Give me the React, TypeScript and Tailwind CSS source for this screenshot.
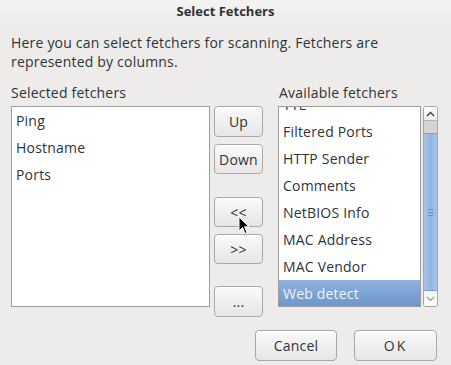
import React from "react";

const font = { fontFamily: '"Open Sans", "DejaVu Sans", sans-serif' };

function Btn({ children, className = "" }: { children: React.ReactNode; className?: string }) {
  return (
    <div
      className={
        "flex items-center justify-center rounded-[4px] border border-[#a9a9a9] bg-gradient-to-b from-[#fafafa] to-[#e6e6e6] text-[14px] text-[#2e3436] shadow-[inset_0_1px_0_#ffffff] " +
        className
      }
    >
      {children}
    </div>
  );
}

export default function App() {
  const left = ["Ping", "Hostname", "Ports"];
  const right = ["TTL", "Filtered Ports", "HTTP Sender", "Comments", "NetBIOS Info", "MAC Address", "MAC Vendor"];
  return (
    <div className="relative w-[451px] h-[365px] overflow-hidden bg-[#edeceb] text-[#2e3436] tracking-[0.2px]" style={font}>
      <div className="h-[23px] flex items-center justify-center text-[13px] font-bold bg-gradient-to-b from-[#f4f3f2] to-[#eeedec] text-[#2e3436] tracking-normal">
        Select Fetchers
      </div>
      <div className="px-[11px] mt-[10px] text-[14px] leading-[19px]">
        Here you can select fetchers for scanning. Fetchers are
        <br />
        represented by columns.
      </div>
      <div className="flex mt-[12px] pl-[11px]">
        <div className="w-[199px] flex flex-col">
          <div className="h-[23px] text-[14px] leading-[19px]">Selected fetchers</div>
          <div className="h-[201px] border border-[#9c9c9c] bg-white flex flex-col">
            {left.map((t) => (
              <div key={t} className="h-[27px] flex items-center pl-[4px] text-[14px]">
                {t}
              </div>
            ))}
          </div>
        </div>
        <div className="ml-[4px] mt-[23px] w-[49px] flex flex-col">
          <Btn className="h-[31px]">Up</Btn>
          <Btn className="h-[30px] mt-[7px]">Down</Btn>
          <Btn className="h-[30px] mt-[23px]">&lt;&lt;</Btn>
          <Btn className="h-[30px] mt-[7px]">&gt;&gt;</Btn>
          <Btn className="h-[31px] mt-[22px] text-[12px]">...</Btn>
        </div>
        <div className="ml-[15px] flex flex-col">
          <div className="h-[23px] text-[14px] leading-[19px] pl-[1px]">Available fetchers</div>
          <div className="flex">
            <div className="w-[143px] h-[201px] border border-[#9c9c9c] bg-white overflow-hidden">
              <div className="mt-[-16px] flex flex-col">
                {right.map((t) => (
                  <div key={t} className="h-[27px] flex items-center pl-[4px] text-[14px]">
                    {t}
                  </div>
                ))}
                <div className="h-[27px] flex items-center pl-[4px] text-[14px] text-[#eef3fa] bg-gradient-to-b from-[#8eb1dd] to-[#6e96cb]">
                  Web detect
                </div>
              </div>
            </div>
            <div className="ml-[2px] w-[15px] h-[201px] flex flex-col rounded-[3px] border border-[#a6a6a6] bg-[#d3d3d3] overflow-hidden">
              <div className="h-[14px] bg-gradient-to-b from-[#ffffff] to-[#ececec] border-b border-[#b5b5b5] flex items-center justify-center">
                <svg width="9" height="6" viewBox="0 0 9 6">
                  <path d="M1 5 L4.5 1.5 L8 5" stroke="#3a3a3a" strokeWidth="1.3" fill="none" />
                </svg>
              </div>
              <div className="h-[12px]" />
              <div className="flex-1 bg-gradient-to-r from-[#a9c4e8] via-[#93b5e2] to-[#a6c2e7] border-y border-[#7e9fcc] flex items-center justify-center">
                <svg width="5" height="7" viewBox="0 0 5 7">
                  <path d="M0 0.5 H5 M0 3.5 H5 M0 6.5 H5" stroke="#6f8fbf" strokeWidth="1" />
                </svg>
              </div>
              <div className="h-[15px] bg-gradient-to-b from-[#f4f4f4] to-[#ffffff] flex items-center justify-center">
                <svg width="9" height="6" viewBox="0 0 9 6">
                  <path d="M1 1 L4.5 4.5 L8 1" stroke="#9a9a9a" strokeWidth="1.2" fill="none" />
                </svg>
              </div>
            </div>
          </div>
        </div>
      </div>
      <div className="flex justify-end gap-[17px] pr-[14px] mt-[13px]">
        <Btn className="w-[82px] h-[31px]">Cancel</Btn>
        <Btn className="w-[83px] h-[31px] border-[#8a9bb0] tracking-[2px]">OK</Btn>
      </div>
      <svg className="absolute left-[238px] top-[216px]" width="12" height="19" viewBox="0 0 12 19">
        <path d="M1 1 L1 15 L4.5 11.5 L7 17.5 L9 16.6 L6.6 10.8 L11 10.8 Z" fill="#000" stroke="#fff" strokeWidth="1" />
      </svg>
    </div>
  );
}
